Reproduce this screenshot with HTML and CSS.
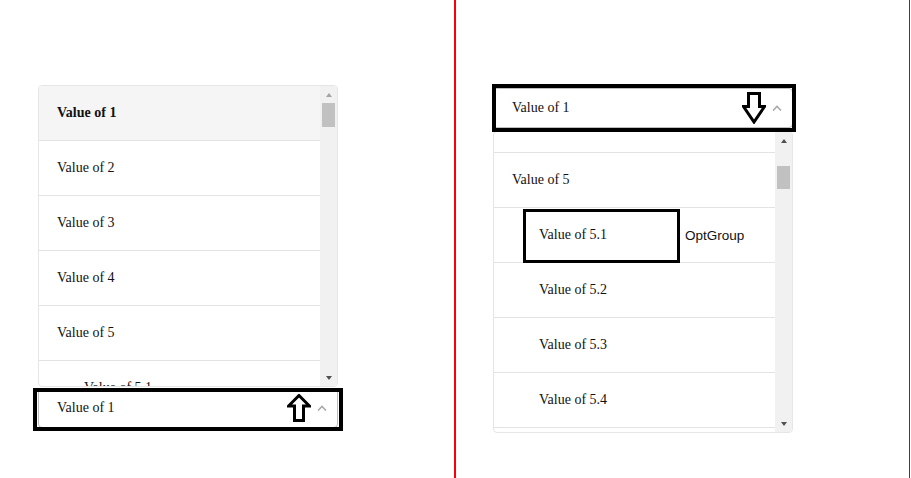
FILE: index.html
```html
<!DOCTYPE html>
<html lang="en">
<head>
  <meta charset="UTF-8" />
  <title>Dropdown menu placement</title>
  <link rel="stylesheet" href="styles.css">
</head>
<body>

  <div class="pane pane-left">
    <div class="menu menu-up">
      <ul class="options">
        <li class="option is-selected">Value of 1</li>
        <li class="option">Value of 2</li>
        <li class="option">Value of 3</li>
        <li class="option">Value of 4</li>
        <li class="option">Value of 5</li>
        <li class="option option-child">Value of 5.1</li>
      </ul>
      <div class="rail">
        <span class="rail-btn"><i class="tri tri-up is-disabled"></i></span>
        <div class="rail-track"><div class="rail-thumb"></div></div>
        <span class="rail-btn"><i class="tri tri-down"></i></span>
      </div>
    </div>
    <div class="select mark-up">
      <span class="select-value">Value of 1</span>
      <svg class="hint" width="24" height="28" viewBox="0 0 24 28">
        <polygon points="12,1.5 22.5,12 16.5,12 16.5,26.5 7.5,26.5 7.5,12 1.5,12" />
      </svg>
      <svg class="chevron" width="10" height="6" viewBox="0 0 10 6">
        <polyline points="1,5.5 5,1.5 9,5.5" />
      </svg>
    </div>
  </div>

  <div class="pane pane-right">
    <div class="select mark-down">
      <span class="select-value">Value of 1</span>
      <svg class="hint" width="24" height="32" viewBox="0 0 24 32">
        <polygon points="6.5,1.5 17.5,1.5 17.5,14.5 22.5,14.5 12,30 1.5,14.5 6.5,14.5" />
      </svg>
      <svg class="chevron" width="10" height="6" viewBox="0 0 10 6">
        <polyline points="1,5.5 5,1.5 9,5.5" />
      </svg>
    </div>
    <div class="menu menu-down">
      <ul class="options">
        <li class="option">Value of 4</li>
        <li class="option">Value of 5</li>
        <li class="option option-child is-marked">Value of 5.1<span class="note">OptGroup</span></li>
        <li class="option option-child">Value of 5.2</li>
        <li class="option option-child">Value of 5.3</li>
        <li class="option option-child">Value of 5.4</li>
        <li class="option option-child">Value of 5.5</li>
      </ul>
      <div class="rail">
        <span class="rail-btn"><i class="tri tri-up"></i></span>
        <div class="rail-track"><div class="rail-thumb"></div></div>
        <span class="rail-btn"><i class="tri tri-down"></i></span>
      </div>
    </div>
  </div>

</body>
</html>
```

FILE: styles.css
```css
html, body {
  margin: 0; padding: 0;
  background: white; color: #111;
  font-family: "Liberation Serif", "Times New Roman", serif;
  font-size: 14px;
}
body { display: flex; height: 100vh; }

.pane { box-sizing: border-box; height: 100%; }
.pane-left {
  width: 456px; padding: 85px 0 0 38px;
  border-right: 2px solid #ff0000;
}
.pane-right {
  width: 454px; padding: 88px 0 0 37px;
  border-right: 1px solid #d40000;
}

/* option list */
.menu {
  box-sizing: border-box;
  width: 300px; height: 302px;
  display: flex; align-items: flex-start;
  border: 1px solid #e6e6e6; border-radius: 4px;
  overflow: hidden;
}
.menu-up { margin-bottom: 1px; }
.menu-down { margin-top: 3px; }
.menu-down .options { margin-top: -34px; }

.options {
  flex: 1;
  margin: 0; padding: 0; list-style: none;
}
.option {
  position: relative;
  display: flex; align-items: center;
  height: 54px; padding-left: 18px;
  border-bottom: 1px solid #e3e3e3;
}
.option-child { padding-left: 45px; }
.option.is-selected { background: #f5f5f5; font-weight: bold; }

.option.is-marked::before {
  content: ''; position: absolute;
  left: 29px; top: 1px; width: 151px; height: 48px;
  border: 3px solid #000;
}
.note {
  position: absolute; left: 191px;
  font-family: "Liberation Sans", Arial, sans-serif;
  font-size: 13.5px; color: #111;
}

/* scrollbar */
.rail {
  align-self: stretch;
  width: 17px; flex: none;
  display: flex; flex-direction: column;
  background: #f1f1f1;
}
.rail-btn {
  height: 17px; flex: none;
  display: flex; align-items: center; justify-content: center;
}
.rail-track { flex: 1; }
.rail-thumb {
  height: 24px; margin: 0 2px;
  background: #c1c1c1;
}
.menu-down .rail-thumb { margin-top: 17px; height: 23px; }

.tri {
  width: 0; height: 0;
  border-left: 3.5px solid transparent;
  border-right: 3.5px solid transparent;
}
.tri-up { border-bottom: 4px solid #505050; }
.tri-up.is-disabled { border-bottom-color: #a3a3a3; }
.tri-down { border-top: 4px solid #505050; }

/* select control */
.select {
  position: relative;
  box-sizing: border-box;
  width: 300px; height: 40px;
  display: flex; align-items: center; gap: 6px;
  padding: 0 10px 0 18px;
  border: 1px solid #bdbdbd; border-radius: 4px;
  background: white;
}
.select-value { flex: 1; }
.chevron polyline { fill: none; stroke: #aaa; stroke-width: 1.6; }
.hint polygon { fill: white; stroke: #000; stroke-width: 3; }

.mark-up::after, .mark-down::after {
  content: ''; position: absolute;
  border: 4px solid #000;
}
.mark-up::after { top: -1px; bottom: -4px; left: -6px; right: -6px; }
.mark-down::after { top: -5px; bottom: -5px; left: -2px; right: -4px; }
```
